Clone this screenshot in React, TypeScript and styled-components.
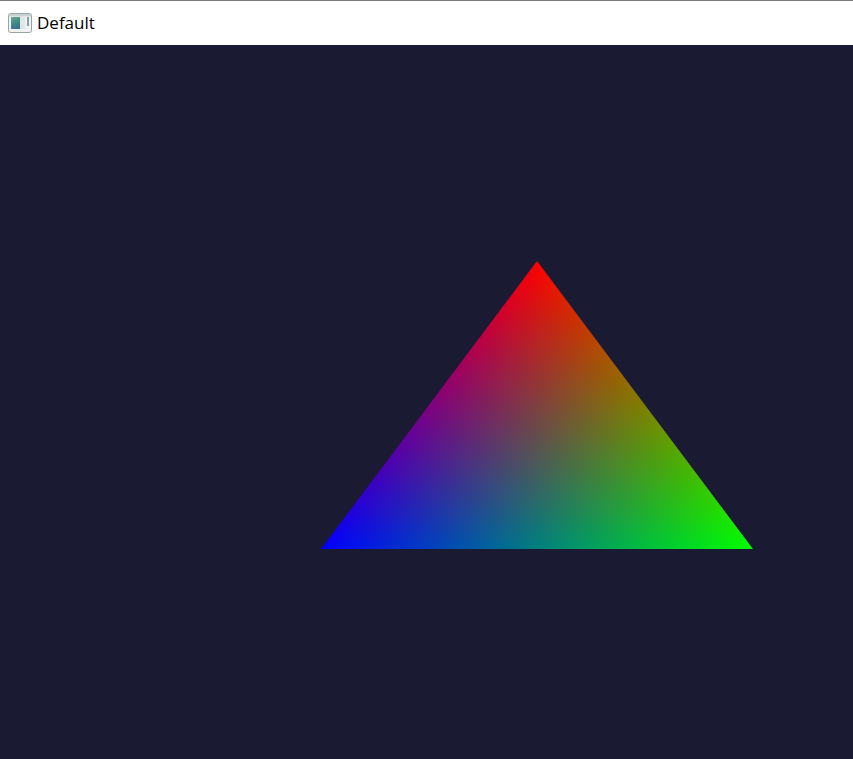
import React from "react";
import styled, { createGlobalStyle } from "styled-components";

const Global = createGlobalStyle`
  html, body { margin: 0; padding: 0; height: 100%; background: #1a1a33; overflow: hidden; }
  #root { height: 100%; }
`;
const Window = styled.div`
  display: flex;
  flex-direction: column;
  width: 853px;
  height: 759px;
  background: #1a1a33;
`;
const TitleBar = styled.header`
  flex: none;
  display: flex;
  align-items: center;
  gap: 5px;
  height: 44px;
  padding: 0 0 0 8px;
  background: #ffffff;
  border-top: 1px solid #7a7a7a;
`;
const AppIcon = styled.svg`
  display: block;
  flex: none;
  width: 24px;
  height: 20px;
  margin-top: -1px;
`;
const Title = styled.span`
  font-family: "Open Sans", "Noto Sans", sans-serif;
  font-size: 17px;
  line-height: 22px;
  color: #000000;
`;
const Viewport = styled.main`
  flex: 1;
  min-height: 0;
`;
const Scene = styled.svg`
  display: block;
  width: 853px;
  height: 714px;
`;
const Isolated = styled.g`
  isolation: isolate;
`;
const Channel = styled.rect`
  mix-blend-mode: plus-lighter;
`;

const POINTS = "537,216 321,504 753,504";
const BOX = { x: 311, y: 206, width: 452, height: 308 };

export default function App() {
  return (
    <Window>
      <Global />
      <TitleBar>
        <AppIcon viewBox="0 0 24 20">
          <defs>
            <linearGradient id="ic" x1="0" y1="0" x2="0.4" y2="1">
              <stop offset="0" stopColor="#6fa896" />
              <stop offset="0.55" stopColor="#3f8f80" />
              <stop offset="1" stopColor="#3a7398" />
            </linearGradient>
          </defs>
          <rect x="0.5" y="0.5" width="23" height="19" rx="2" fill="#f1f3f3" stroke="#9aa3a3" />
          <rect x="1" y="1" width="22" height="2.5" fill="#c9d0d0" />
          <rect x="3" y="4" width="9" height="12" fill="url(#ic)" />
          <rect x="12" y="4" width="5" height="12" fill="#dfe6e4" />
          <rect x="19" y="4" width="2" height="9" fill="#7fa5a5" />
        </AppIcon>
        <Title>Default</Title>
      </TitleBar>
      <Viewport>
        <Scene viewBox="0 0 853 714">
          <defs>
            <clipPath id="tri">
              <polygon points={POINTS} />
            </clipPath>
            <linearGradient id="r" gradientUnits="userSpaceOnUse" x1="537" y1="216" x2="537" y2="504">
              <stop offset="0" stopColor="#ff0000" />
              <stop offset="1" stopColor="#000000" />
            </linearGradient>
            <linearGradient id="g" gradientUnits="userSpaceOnUse" x1="753" y1="504" x2="476.52" y2="296.64">
              <stop offset="0" stopColor="#00ff00" />
              <stop offset="1" stopColor="#000000" />
            </linearGradient>
            <linearGradient id="b" gradientUnits="userSpaceOnUse" x1="321" y1="504" x2="597.48" y2="296.64">
              <stop offset="0" stopColor="#0000ff" />
              <stop offset="1" stopColor="#000000" />
            </linearGradient>
          </defs>
          <Isolated clipPath="url(#tri)">
            <rect {...BOX} fill="#000000" />
            <Channel {...BOX} fill="url(#r)" />
            <Channel {...BOX} fill="url(#g)" />
            <Channel {...BOX} fill="url(#b)" />
          </Isolated>
        </Scene>
      </Viewport>
    </Window>
  );
}
